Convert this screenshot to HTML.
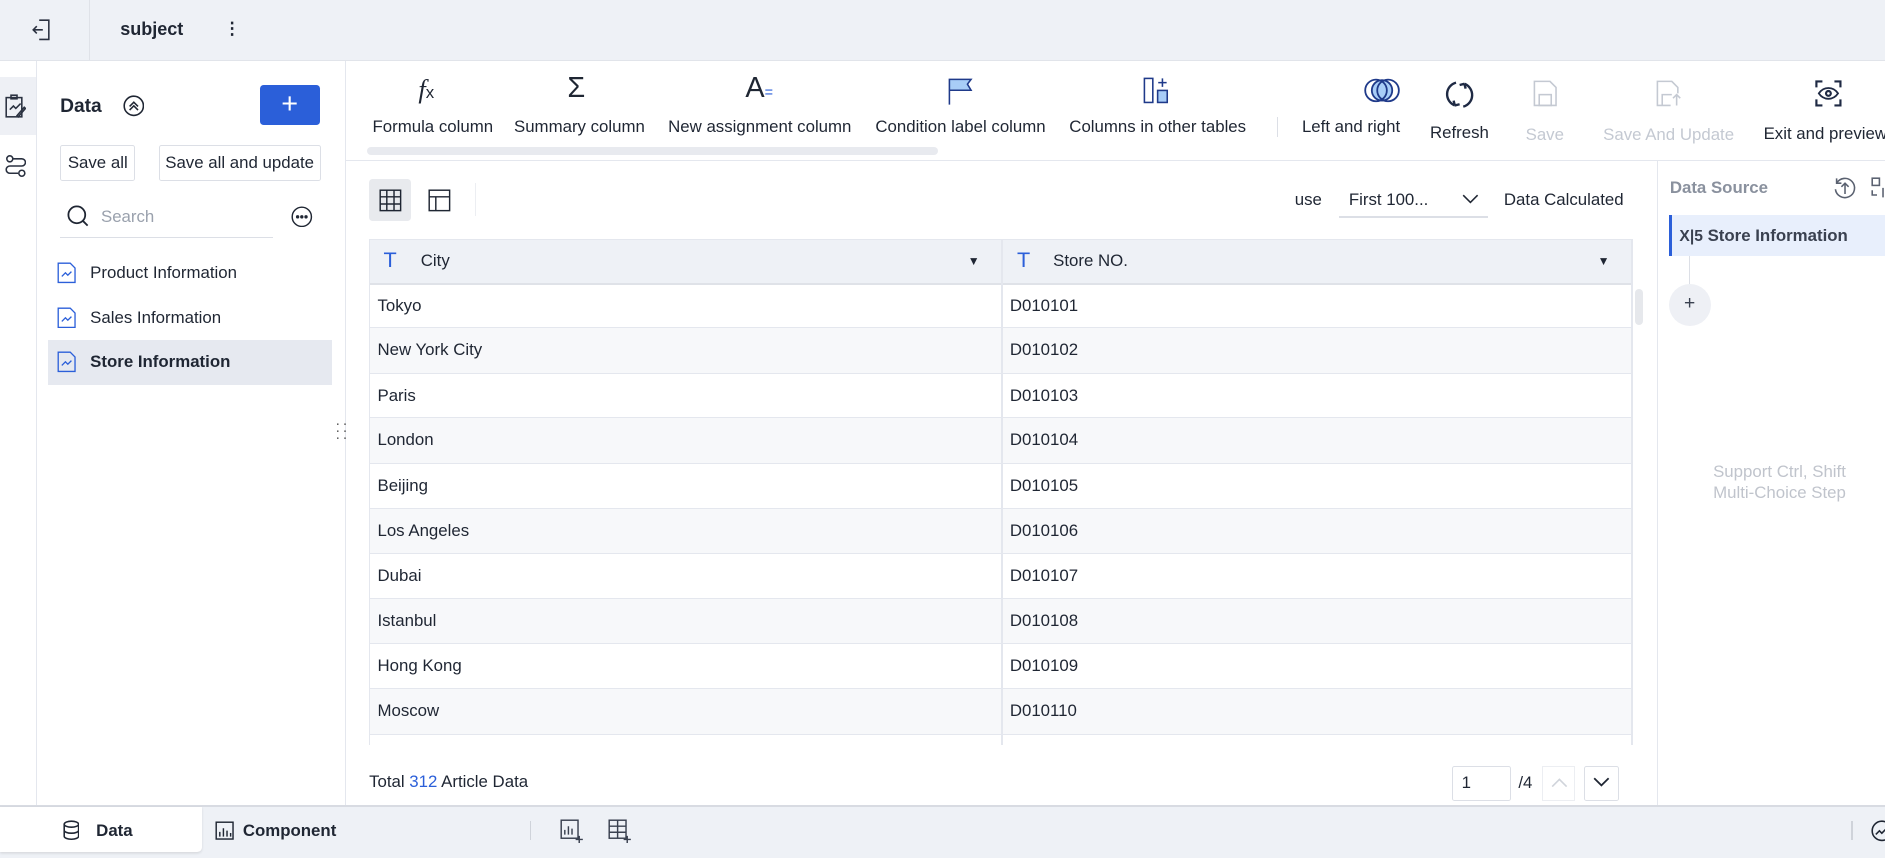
<!DOCTYPE html>
<html><head><meta charset="utf-8"><style>
html,body{margin:0;padding:0;overflow:hidden}
body{width:1885px;height:858px;background:#fff;font-family:"Liberation Sans",sans-serif;color:#1f2633}
#w{position:relative;width:1568px;height:714px;zoom:1.20217;overflow:hidden}
.a{position:absolute}
.t{position:absolute;white-space:nowrap;font-size:14px;line-height:16px}
.ic{position:absolute}
.row{position:absolute;left:307px;width:1050px;height:37px;border-bottom:1px solid #e4e7ee;box-sizing:border-box}
.row.g{background:#f7f8fa;height:38px}
.row span{position:absolute;top:10px;font-size:14px}
.tb{position:absolute;font-size:14px;white-space:nowrap;transform:translateX(-50%)}
</style></head><body><div id="w">
<!-- top bar -->
<div class="a" style="left:0;top:0;width:1568px;height:50px;background:#eef1f6;border-bottom:1px solid #e1e4ea"></div>
<div class="a" style="left:74px;top:0;width:1px;height:50px;background:#dfe2e8"></div>
<svg class="ic" style="left:27px;top:16px" width="16" height="18" viewBox="0 0 16 18" fill="none" stroke="#2a3140" stroke-width="1.3"><path d="M6 1h8v16H6M1 9h8M4 6L1 9l3 3"/></svg>
<div class="t" style="left:100px;top:17px;font-size:15px;font-weight:bold">subject</div>
<div class="t" style="left:186px;top:16px;font-size:14px;font-weight:bold">⋮</div>
<!-- rail -->
<div class="a" style="left:0;top:64px;width:30px;height:48px;background:#eef0f5"></div>
<div class="a" style="left:30px;top:51px;width:1px;height:620px;background:#e4e7ee"></div>
<svg class="ic" style="left:4px;top:78px" width="18" height="20" viewBox="0 0 18 20" fill="none" stroke="#2a3140" stroke-width="1.3"><rect x="1" y="3" width="13" height="16"/><rect x="5" y="1" width="5" height="3"/><path d="M4 13l3-3 2 2 4-4M10 18l6-7 1 1-6 7z"/></svg>
<svg class="ic" style="left:4px;top:128px" width="18" height="20" viewBox="0 0 18 20" fill="none" stroke="#2a3140" stroke-width="1.3"><circle cx="4" cy="4" r="2.5"/><path d="M7 4h7a3 3 0 010 6H4a3 3 0 000 6h7"/><circle cx="14" cy="16" r="2.5"/></svg>
<!-- data panel -->
<div class="a" style="left:287px;top:51px;width:1px;height:620px;background:#e4e7ee"></div>
<div class="t" style="left:50px;top:80px;font-size:16px;font-weight:bold;line-height:18px">Data</div>
<svg class="ic" style="left:102px;top:79px" width="18" height="18" viewBox="0 0 18 18" fill="none" stroke="#1f2633" stroke-width="1.3"><circle cx="9" cy="9" r="8"/><path d="M5.5 9.5L9 6l3.5 3.5M5.5 12.5L9 9l3.5 3.5"/></svg>
<div class="a" style="left:216px;top:71px;width:50px;height:33px;background:#2b5fd9;border-radius:3px;color:#fff;font-size:24px;line-height:32px;text-align:center">+</div>
<div class="a" style="left:50px;top:121px;width:61px;height:28px;border:1px solid #dcdfe6;border-radius:2px;font-size:14px;line-height:28px;text-align:center">Save all</div>
<div class="a" style="left:132px;top:121px;width:133px;height:28px;border:1px solid #dcdfe6;border-radius:2px;font-size:14px;line-height:28px;text-align:center;white-space:nowrap">Save all and update</div>
<svg class="ic" style="left:55px;top:170px" width="20" height="20" viewBox="0 0 20 20" fill="none" stroke="#1f2633" stroke-width="1.5"><circle cx="9" cy="9" r="7"/><path d="M14 14l4 4"/></svg>
<div class="t" style="left:84px;top:172px;color:#9aa1ad">Search</div>
<div class="a" style="left:50px;top:197px;width:177px;height:1px;background:#dcdfe6"></div>
<svg class="ic" style="left:242px;top:171px" width="18" height="18" viewBox="0 0 18 18" fill="none" stroke="#1f2633" stroke-width="1.2"><circle cx="9" cy="9" r="8"/><circle cx="5.5" cy="9" r=".8" fill="#1f2633"/><circle cx="9" cy="9" r=".8" fill="#1f2633"/><circle cx="12.5" cy="9" r=".8" fill="#1f2633"/></svg>
<div class="a" style="left:40px;top:283px;width:236px;height:37px;background:#e6e9f0"></div>
<svg class="ic" style="left:47px;top:218px" width="16" height="18" viewBox="0 0 16 18" fill="none" stroke="#2b5fd9" stroke-width="1.1"><path d="M1 1h10l4 4v12H1z"/><path d="M4 12l3-3 2 2 3-3"/></svg>
<svg class="ic" style="left:47px;top:255px" width="16" height="18" viewBox="0 0 16 18" fill="none" stroke="#2b5fd9" stroke-width="1.1"><path d="M1 1h10l4 4v12H1z"/><path d="M4 12l3-3 2 2 3-3"/></svg>
<svg class="ic" style="left:47px;top:292px" width="16" height="18" viewBox="0 0 16 18" fill="none" stroke="#2b5fd9" stroke-width="1.1"><path d="M1 1h10l4 4v12H1z"/><path d="M4 12l3-3 2 2 3-3"/></svg>
<div class="t" style="left:75px;top:219px">Product Information</div>
<div class="t" style="left:75px;top:256px">Sales Information</div>
<div class="t" style="left:75px;top:293px;font-weight:bold">Store Information</div>
<div class="t" style="left:279px;top:350px;font-size:12px;color:#555;line-height:6px;letter-spacing:2px">··<br>··<br>··</div>
<!-- toolbar -->
<div class="a" style="left:288px;top:133px;width:1280px;height:1px;background:#e4e7ee"></div>
<div class="a" style="left:305px;top:122px;width:475px;height:7px;background:#e8eaef;border-radius:4px"></div>
<div class="t" style="left:348px;top:62px;font-size:22px;font-style:italic;font-family:'Liberation Serif',serif;line-height:24px">f<span style="font-size:14px;font-style:normal;font-family:'Liberation Sans'">x</span></div>
<div class="t" style="left:472px;top:61px;font-size:24px;line-height:26px">Σ</div>
<div class="t" style="left:620px;top:61px;font-size:24px;line-height:26px">A<span style="font-size:12px;color:#2b5fd9">=</span></div>
<svg class="ic" style="left:788px;top:64px" width="22" height="24" viewBox="0 0 22 24" fill="none" stroke="#1f3a8a" stroke-width="1.3"><path d="M2 23V2h18l-3 4 3 5H2" fill="#a8cdf7"/></svg>
<svg class="ic" style="left:950px;top:63px" width="24" height="24" viewBox="0 0 24 24" fill="none" stroke="#1f3a8a" stroke-width="1.3"><rect x="2" y="2" width="7" height="20"/><rect x="13" y="12" width="8" height="10" fill="#a8cdf7"/><path d="M17 2v7M13.5 5.5h7"/></svg>
<div class="tb" style="left:360px;top:97px">Formula column</div>
<div class="tb" style="left:482px;top:97px">Summary column</div>
<div class="tb" style="left:632px;top:97px">New assignment column</div>
<div class="tb" style="left:799px;top:97px">Condition label column</div>
<div class="tb" style="left:963px;top:97px">Columns in other tables</div>
<div class="a" style="left:1062px;top:97px;width:1px;height:17px;background:#dcdfe6"></div>
<svg class="ic" style="left:1135px;top:63px" width="30" height="24" viewBox="0 0 30 24" fill="none" stroke="#1f3a8a" stroke-width="1.5"><path d="M15 3.5a8.5 8.5 0 010 17a8.5 8.5 0 010-17z" fill="#a8cdf7"/><circle cx="10" cy="12" r="9"/><circle cx="20" cy="12" r="9"/></svg>
<div class="a" style="left:1083px;top:97px;width:85px;overflow:hidden;font-size:14px;white-space:nowrap">Left and right</div>
<svg class="ic" style="left:1201px;top:66px" width="26" height="26" viewBox="0 0 26 26" fill="none" stroke="#1f2a44" stroke-width="2"><path d="M10 3a10 10 0 00-1 19M16 23a10 10 0 001-19"/><path d="M9 22l-1-4M9 22l4-1M17 4l1 4M17 4l-4 1"/></svg>
<div class="tb" style="left:1214px;top:102px">Refresh</div>
<svg class="ic" style="left:1274px;top:66px" width="22" height="24" viewBox="0 0 22 24" fill="none" stroke="#c4c9d2" stroke-width="1.3"><path d="M2 2h13l5 5v15H2z"/><rect x="6" y="13" width="10" height="9"/></svg>
<div class="tb" style="left:1285px;top:104px;color:#c4c9d2">Save</div>
<svg class="ic" style="left:1377px;top:66px" width="24" height="24" viewBox="0 0 24 24" fill="none" stroke="#c4c9d2" stroke-width="1.3"><path d="M13 22H2V2h12l5 5v5"/><path d="M6 22v-9h8M18 22v-8M15 16l3-3 3 3"/></svg>
<div class="tb" style="left:1388px;top:104px;color:#c4c9d2">Save And Update</div>
<svg class="ic" style="left:1509px;top:66px" width="24" height="24" viewBox="0 0 24 24" fill="none" stroke="#1f2a44" stroke-width="1.8"><path d="M2 7V2h5M17 2h5v5M22 17v5h-5M7 22H2v-5"/><path d="M4 12c4-6 12-6 16 0c-4 6-12 6-16 0z" stroke-width="1.5"/><circle cx="12" cy="12" r="2"/></svg>
<div class="t" style="left:1467px;top:103px">Exit and preview</div>
<!-- view toggles -->
<div class="a" style="left:307px;top:149px;width:35px;height:35px;background:#e8eaee;border-radius:3px"></div>
<svg class="ic" style="left:315px;top:157px" width="19" height="19" viewBox="0 0 19 19" fill="none" stroke="#1f2633" stroke-width="1.2"><rect x="1" y="1" width="17" height="17"/><path d="M1 6.5h17M1 12.5h17M6.5 1v17M12.5 1v17"/></svg>
<svg class="ic" style="left:356px;top:157px" width="19" height="19" viewBox="0 0 19 19" fill="none" stroke="#1f2633" stroke-width="1.2"><rect x="1" y="1" width="17" height="17"/><path d="M1 6.5h17M6.5 6.5v11.5"/></svg>
<div class="a" style="left:395px;top:152px;width:1px;height:28px;background:#eceef2"></div>
<div class="t" style="left:1077px;top:158px">use</div>
<div class="t" style="left:1122px;top:158px">First 100...</div>
<svg class="ic" style="left:1216px;top:161px" width="14" height="9" viewBox="0 0 14 9" fill="none" stroke="#1f2633" stroke-width="1.3"><path d="M1 1l6 6 6-6"/></svg>
<div class="a" style="left:1114px;top:180px;width:124px;height:1px;background:#dcdfe6"></div>
<div class="t" style="left:1251px;top:158px">Data Calculated</div>
<!-- table -->
<div class="row" style="top:236px"><span style="left:7px">Tokyo</span><span style="left:533px">D010101</span></div>
<div class="row g" style="top:273px"><span style="left:7px">New York City</span><span style="left:533px">D010102</span></div>
<div class="row" style="top:311px"><span style="left:7px">Paris</span><span style="left:533px">D010103</span></div>
<div class="row g" style="top:348px"><span style="left:7px">London</span><span style="left:533px">D010104</span></div>
<div class="row" style="top:386px"><span style="left:7px">Beijing</span><span style="left:533px">D010105</span></div>
<div class="row g" style="top:423px"><span style="left:7px">Los Angeles</span><span style="left:533px">D010106</span></div>
<div class="row" style="top:461px"><span style="left:7px">Dubai</span><span style="left:533px">D010107</span></div>
<div class="row g" style="top:498px"><span style="left:7px">Istanbul</span><span style="left:533px">D010108</span></div>
<div class="row" style="top:536px"><span style="left:7px">Hong Kong</span><span style="left:533px">D010109</span></div>
<div class="row g" style="top:573px"><span style="left:7px">Moscow</span><span style="left:533px">D010110</span></div>
<div class="a" style="left:307px;top:199px;width:1050px;height:36px;background:#eef1f6;border-bottom:2px solid #dfe2e8;border-top:1px solid #e4e7ee"></div>
<div class="a" style="left:833px;top:199px;width:1px;height:421px;background:#e4e7ee"></div>
<div class="a" style="left:307px;top:199px;width:1px;height:421px;background:#e4e7ee"></div>
<div class="a" style="left:1357px;top:199px;width:1px;height:421px;background:#e4e7ee"></div>
<div class="t" style="left:319px;top:207px;font-size:18px;color:#2b5fd9;line-height:18px">T</div>
<div class="t" style="left:350px;top:209px">City</div>
<div class="t" style="left:805px;top:210px;font-size:10px">▼</div>
<div class="t" style="left:846px;top:207px;font-size:18px;color:#2b5fd9;line-height:18px">T</div>
<div class="t" style="left:876px;top:209px">Store NO.</div>
<div class="t" style="left:1329px;top:210px;font-size:10px">▼</div>
<div class="a" style="left:1360px;top:240px;width:7px;height:30px;background:#e6e8ec;border-radius:4px"></div>
<div class="t" style="left:307px;top:642px">Total <span style="color:#2b5fd9">312</span> Article Data</div>
<div class="a" style="left:1208px;top:637px;border:1px solid #dcdfe6;border-radius:2px;font-size:14px;line-height:27px;padding-left:7px;box-sizing:border-box;width:49px;height:29px">1</div>
<div class="t" style="left:1263px;top:643px">/4</div>
<div class="a" style="left:1283px;top:637px;width:27px;height:29px;border:1px solid #eceef2;box-sizing:border-box"></div>
<svg class="ic" style="left:1290px;top:646px" width="14" height="9" viewBox="0 0 14 9" fill="none" stroke="#d0d4db" stroke-width="1.3"><path d="M1 8l6-6 6 6"/></svg>
<div class="a" style="left:1318px;top:637px;width:29px;height:29px;border:1px solid #dcdfe6;box-sizing:border-box;border-radius:2px"></div>
<svg class="ic" style="left:1325px;top:646px" width="14" height="9" viewBox="0 0 14 9" fill="none" stroke="#1f2633" stroke-width="1.5"><path d="M1 1l6 6 6-6"/></svg>
<!-- right panel -->
<div class="a" style="left:1378px;top:134px;width:1px;height:537px;background:#e4e7ee"></div>
<div class="t" style="left:1389px;top:148px;color:#8a919e;font-weight:bold">Data Source</div>
<svg class="ic" style="left:1525px;top:146px" width="20" height="20" viewBox="0 0 20 20" fill="none" stroke="#5a6170" stroke-width="1.3"><path d="M3 6a8 8 0 11-1 5M3 2v4h4"/><path d="M10 15V6M7 9l3-3 3 3"/></svg>
<svg class="ic" style="left:1556px;top:147px" width="14" height="18" viewBox="0 0 14 18" fill="none" stroke="#5a6170" stroke-width="1.3"><rect x="1" y="1" width="6" height="6"/><path d="M1 11v4h4M10 9v8"/></svg>
<div class="a" style="left:1388px;top:179px;width:180px;height:34px;background:#e8effc;border-left:3px solid #2b5fd9;box-sizing:border-box"></div>
<div class="t" style="left:1397px;top:188px;font-weight:bold;color:#3a4150"><span style="font-size:13px">X|5</span> Store Information</div>
<div class="a" style="left:1405px;top:213px;width:1px;height:24px;background:#dcdfe6"></div>
<div class="a" style="left:1388px;top:236px;width:35px;height:35px;border-radius:50%;background:#eef0f5;text-align:center;line-height:34px;font-size:16px;color:#3a4150">+</div>
<div class="t" style="left:1425px;top:384px;color:#c0c4cc">Support Ctrl, Shift</div>
<div class="t" style="left:1425px;top:402px;color:#c0c4cc">Multi-Choice Step</div>
<!-- bottom bar -->
<div class="a" style="left:0;top:670px;width:1568px;height:44px;background:#eef1f6;border-top:2px solid #d8dbe2;box-sizing:border-box"></div>
<div class="a" style="left:0;top:671px;width:168px;height:38px;background:#fff;border-radius:0 0 4px 0;box-shadow:0 1px 2px rgba(0,0,0,.1)"></div>
<svg class="ic" style="left:52px;top:682px" width="14" height="17" viewBox="0 0 14 17" fill="none" stroke="#1f2633" stroke-width="1.3"><ellipse cx="7" cy="3.5" rx="6" ry="2.5"/><path d="M1 3.5v10c0 1.4 2.7 2.5 6 2.5s6-1.1 6-2.5v-10M1 8.5c0 1.4 2.7 2.5 6 2.5s6-1.1 6-2.5"/></svg>
<div class="t" style="left:80px;top:683px;font-weight:bold">Data</div>
<svg class="ic" style="left:179px;top:683px" width="16" height="16" viewBox="0 0 16 16" fill="none" stroke="#1f2633" stroke-width="1.2"><rect x="1" y="1" width="14" height="14"/><path d="M4 13V9M7 13V6M10 13V8M13 13v-3"/></svg>
<div class="t" style="left:202px;top:683px;font-weight:bold">Component</div>
<div class="a" style="left:441px;top:683px;width:1px;height:16px;background:#cfd3da"></div>
<svg class="ic" style="left:466px;top:681px" width="20" height="20" viewBox="0 0 20 20" fill="none" stroke="#3a4150" stroke-width="1.2"><rect x="1" y="1" width="14" height="15"/><path d="M4 13V9M7 13V6M10 13V8M16 14v6M13 17h6"/></svg>
<svg class="ic" style="left:506px;top:681px" width="20" height="20" viewBox="0 0 20 20" fill="none" stroke="#3a4150" stroke-width="1.2"><rect x="1" y="1" width="14" height="15"/><path d="M1 6h14M1 11h14M8 1v15M16 14v6M13 17h6"/></svg>
<div class="a" style="left:1540px;top:683px;width:1px;height:16px;background:#cfd3da"></div>
<svg class="ic" style="left:1556px;top:682px" width="18" height="18" viewBox="0 0 18 18" fill="none" stroke="#1f2633" stroke-width="1.3"><circle cx="9" cy="9" r="8"/><path d="M4 12l3-3 2 2 4-4"/></svg>
</div></body></html>
